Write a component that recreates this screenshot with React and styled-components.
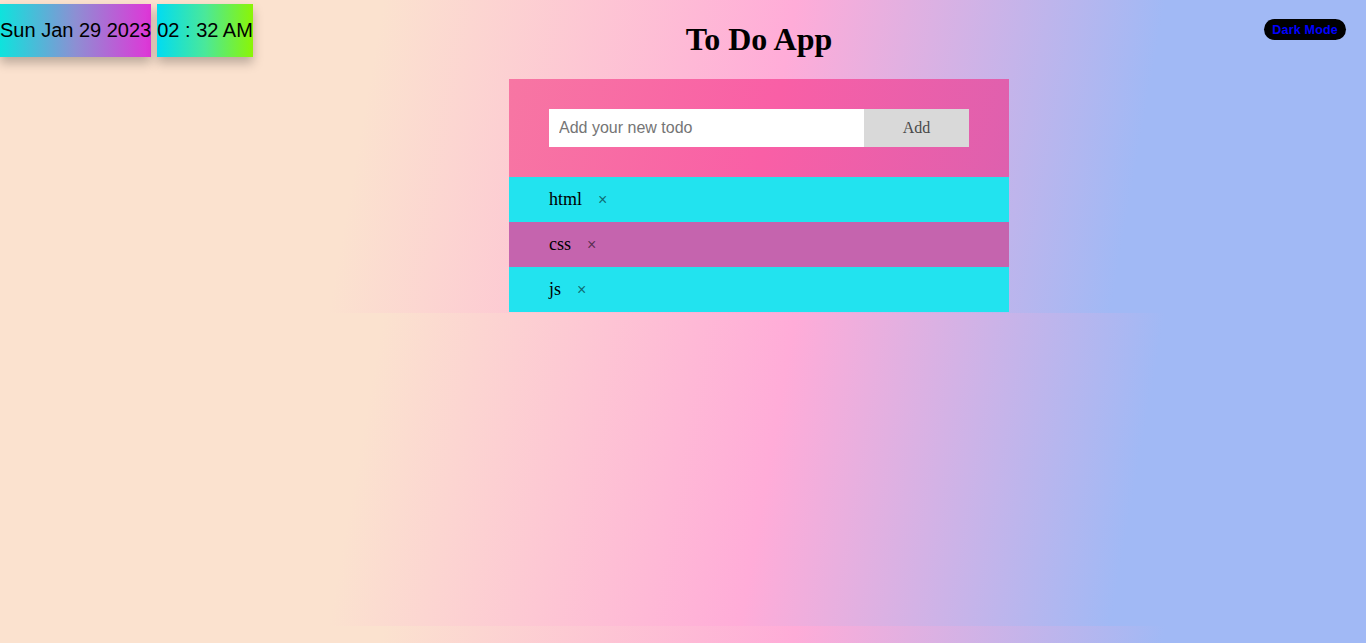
import React from "react";
import styled, { createGlobalStyle } from "styled-components";

const Global = createGlobalStyle`
  html {
    background: linear-gradient(100deg, #fbe2cf 27%, #ffacd8 56%, #a1b9f5 82%);
    background-size: 100% 313px;
    background-repeat: repeat;
    min-height: 100%;
  }
  body {
    margin: 0;
    font-family: "Liberation Serif", "Times New Roman", serif;
  }
`;

const ClockBar = styled.div`
  position: absolute;
  top: 4px;
  left: 0;
  display: flex;
  gap: 6px;
`;

const ClockBox = styled.div`
  height: 53px;
  line-height: 53px;
  font-family: "Liberation Sans", Arial, sans-serif;
  font-size: 20px;
  color: #000;
  white-space: nowrap;
  background: ${(p) => p.$bg};
  box-shadow: 0 6px 10px rgba(0, 0, 0, 0.25);
`;

const ModeToggle = styled.button`
  position: absolute;
  top: 19px;
  right: 20px;
  height: 21px;
  padding: 0 8px;
  border: none;
  border-radius: 11px;
  background: #000;
  color: #0000ff;
  font-family: "Liberation Sans", Arial, sans-serif;
  font-weight: bold;
  font-size: 12.5px;
  letter-spacing: 0.2px;
  cursor: pointer;
`;

const Main = styled.main`
  padding-left: 152px;
`;

const Title = styled.h1`
  margin: 21px 0;
  text-align: center;
  font-size: 32px;
  font-weight: bold;
  line-height: 37px;
`;

const Card = styled.section`
  width: 500px;
  margin: 0 auto;
`;

const FormArea = styled.form`
  display: flex;
  padding: 30px 40px;
  background: linear-gradient(105deg, #f776a3 0%, #f95fa6 52%, #de60ae 100%);
`;

const TodoInput = styled.input`
  flex: 1;
  height: 38px;
  border: none;
  outline: none;
  padding: 0 10px;
  font-family: "Liberation Sans", Arial, sans-serif;
  font-size: 16px;
  background: #fff;
  &::placeholder {
    color: #757575;
  }
`;

const AddButton = styled.button`
  width: 105px;
  height: 38px;
  border: none;
  background: #d9d9d9;
  color: #4a4a4a;
  font-family: "Liberation Serif", "Times New Roman", serif;
  font-size: 16px;
`;

const List = styled.ul`
  list-style: none;
  margin: 0;
  padding: 0;
`;

const Row = styled.li`
  display: flex;
  align-items: center;
  gap: 16px;
  height: 45px;
  padding: 0 40px;
  background: ${(p) => p.$bg};
  font-size: 18px;
  color: #000;
`;

const Remove = styled.span`
  font-family: "Liberation Sans", Arial, sans-serif;
  font-size: 16px;
  color: rgba(0, 0, 0, 0.55);
  cursor: pointer;
`;

const todos = [
  { text: "html", bg: "#22e3ef" },
  { text: "css", bg: "#c564ae" },
  { text: "js", bg: "#22e3ef" },
];

export default function App() {
  return (
    <>
      <Global />
      <ClockBar>
        <ClockBox $bg="linear-gradient(to right, #0ee3dd, #8d8fd3 50%, #e035d8)">
          Sun Jan 29 2023
        </ClockBox>
        <ClockBox $bg="linear-gradient(to right, #00dcf2, #4ae89a 50%, #8bf505)">
          02 : 32 AM
        </ClockBox>
      </ClockBar>
      <ModeToggle>Dark Mode</ModeToggle>
      <Main>
        <Title>To Do App</Title>
        <Card>
          <FormArea onSubmit={(e) => e.preventDefault()}>
            <TodoInput placeholder="Add your new todo" />
            <AddButton type="submit">Add</AddButton>
          </FormArea>
          <List>
            {todos.map((t) => (
              <Row key={t.text} $bg={t.bg}>
                {t.text}
                <Remove>×</Remove>
              </Row>
            ))}
          </List>
        </Card>
      </Main>
    </>
  );
}
